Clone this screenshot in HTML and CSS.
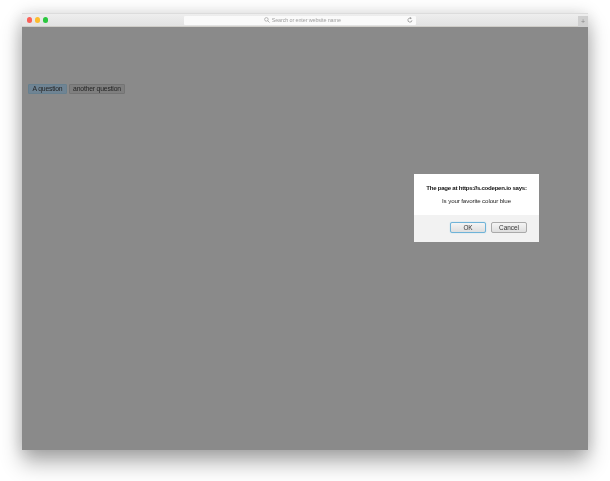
FILE: index.html
```html
<!DOCTYPE html>
<html lang="en">
<head>
<meta charset="utf-8">
<title>Alert</title>
<link rel="stylesheet" href="styles.css">
</head>
<body>
<div class="window">
  <header class="titlebar">
    <div class="lights">
      <span class="light red"></span>
      <span class="light yellow"></span>
      <span class="light green"></span>
    </div>
    <div class="address">
      <div class="address-center">
        <svg class="search" viewBox="0 0 10 10" width="6" height="6"><circle cx="4" cy="4" r="3" fill="none" stroke="#999" stroke-width="1.1"/><path d="M6.2 6.2 9.2 9.2" stroke="#999" stroke-width="1.2"/></svg>
        <span>Search or enter website name</span>
      </div>
      <svg class="reload" viewBox="0 0 10 10" width="6" height="6"><path d="M8.3 5.5A3.4 3.4 0 1 1 6.2 2" fill="none" stroke="#888" stroke-width="1.2"/><path d="M5.4 0 7.9 2 5.4 3.8Z" fill="#888"/></svg>
    </div>
    <div class="newtab">+</div>
  </header>
  <main class="content">
    <div class="actions">
      <button class="btn btn-active">A question</button>
      <button class="btn btn-plain">another question</button>
    </div>
    <div class="dialog">
      <div class="dialog-body">
        <p class="dialog-title">The page at https://s.codepen.io says:</p>
        <p class="dialog-msg">Is your favorite colour blue</p>
      </div>
      <div class="dialog-foot">
        <button class="dbtn dbtn-ok">OK</button>
        <button class="dbtn">Cancel</button>
      </div>
    </div>
  </main>
</div>
</body>
</html>
```
FILE: styles.css
```css
html, body {
  margin: 0;
  height: 100%;
  background: #fff;
  overflow: hidden;
}
body {
  padding: 13px 22px 31px 22px;
  box-sizing: border-box;
  font-family: "Liberation Sans", Arial, sans-serif;
}
.window {
  height: 437px;
  display: flex;
  flex-direction: column;
  box-shadow: 0 13px 20px rgba(0, 0, 0, 0.3), 0 1px 16px rgba(0, 0, 0, 0.16);
  filter: blur(0.4px);
}
.titlebar {
  height: 14px;
  flex: none;
  display: flex;
  align-items: center;
  background: linear-gradient(#eeeeee, #e2e2e2);
  border-top: 1px solid #dcdcdc;
  border-bottom: 1px solid #cfcdc8;
  box-sizing: border-box;
}
.lights {
  display: flex;
  gap: 2.8px;
  padding-left: 4.6px;
  width: 162px;
  box-sizing: border-box;
  flex: none;
}
.light {
  width: 5.2px;
  height: 5.2px;
  border-radius: 50%;
}
.red { background: #fc6058; }
.yellow { background: #fdbc2e; }
.green { background: #2bc83f; }
.address {
  width: 232px;
  height: 9px;
  flex: none;
  position: relative;
  background: #fafafa;
  display: flex;
  align-items: center;
  justify-content: center;
  border-radius: 1px;
}
.address-center {
  display: flex;
  align-items: center;
  gap: 1.5px;
  font-size: 5.4px;
  letter-spacing: -0.1px;
  color: #a0a0a0;
  padding-left: 5px;
  white-space: nowrap;
}
.reload {
  position: absolute;
  right: 3px;
  top: 1.5px;
}
.newtab {
  margin-left: auto;
  width: 10px;
  height: 13px;
  background: #cfcfcf;
  color: #888;
  font-size: 7px;
  line-height: 12px;
  text-align: center;
  align-self: flex-end;
  margin-bottom: -3px;
  position: relative;
}
.content {
  flex: 1;
  background: #8a8a8a;
  position: relative;
}
.actions {
  display: flex;
  gap: 2px;
  padding: 57px 0 0 6px;
}
.btn {
  margin: 0;
  height: 10px;
  padding: 0;
  font: 6.8px/8px "Liberation Sans", Arial, sans-serif;
  letter-spacing: -0.18px;
  color: #242424;
  white-space: nowrap;
  background: #7f7f7f;
  border: 1px solid #747474;
  border-radius: 1px;
}
.btn-active {
  background: #6f8494;
  border-color: #67808f;
  width: 39px;
}
.btn-plain {
  width: 56px;
}
.dialog {
  position: absolute;
  left: 392px;
  top: 147px;
  width: 125px;
  height: 68px;
  background: #fff;
  display: flex;
  flex-direction: column;
}
.dialog-body {
  flex: 1;
  text-align: center;
  font-size: 6.2px;
  letter-spacing: -0.13px;
  color: #222;
  padding-top: 10px;
  box-sizing: border-box;
}
.dialog-title {
  margin: 0 0 5px;
  font-size: 6.1px;
  letter-spacing: -0.26px;
  font-weight: bold;
  color: #111;
  line-height: 8px;
}
.dialog-msg {
  margin: 0;
  line-height: 8px;
}
.dialog-foot {
  height: 27px;
  flex: none;
  background: #f2f2f2;
  display: flex;
  justify-content: flex-end;
  align-items: center;
  gap: 5px;
  padding: 0 12px 2px 0;
  box-sizing: border-box;
}
.dbtn {
  margin: 0;
  width: 36px;
  height: 11px;
  padding: 0;
  font: 6.4px/9px "Liberation Sans", Arial, sans-serif;
  color: #333;
  background: linear-gradient(#f5f5f5, #dedede);
  border: 1px solid #aaa;
  border-radius: 2px;
}
.dbtn-ok {
  border-color: #6fb3d8;
  box-shadow: 0 0 1px #79bce2;
}
```
